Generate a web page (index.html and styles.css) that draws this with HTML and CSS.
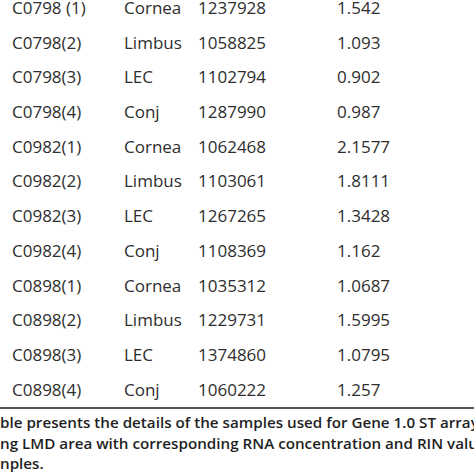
FILE: index.html
```html
<!DOCTYPE html>
<html>
<head>
<meta charset="utf-8">
<link rel="stylesheet" href="styles.css">
</head>
<body>
<div class="page">
  <div class="table">
    <div class="row"><span>C0798 (1)</span><span>Cornea</span><span>1237928</span><span>1.542</span></div>
    <div class="row"><span>C0798(2)</span><span>Limbus</span><span>1058825</span><span>1.093</span></div>
    <div class="row"><span>C0798(3)</span><span>LEC</span><span>1102794</span><span>0.902</span></div>
    <div class="row"><span>C0798(4)</span><span>Conj</span><span>1287990</span><span>0.987</span></div>
    <div class="row"><span>C0982(1)</span><span>Cornea</span><span>1062468</span><span>2.1577</span></div>
    <div class="row"><span>C0982(2)</span><span>Limbus</span><span>1103061</span><span>1.8111</span></div>
    <div class="row"><span>C0982(3)</span><span>LEC</span><span>1267265</span><span>1.3428</span></div>
    <div class="row"><span>C0982(4)</span><span>Conj</span><span>1108369</span><span>1.162</span></div>
    <div class="row"><span>C0898(1)</span><span>Cornea</span><span>1035312</span><span>1.0687</span></div>
    <div class="row"><span>C0898(2)</span><span>Limbus</span><span>1229731</span><span>1.5995</span></div>
    <div class="row"><span>C0898(3)</span><span>LEC</span><span>1374860</span><span>1.0795</span></div>
    <div class="row"><span>C0898(4)</span><span>Conj</span><span>1060222</span><span>1.257</span></div>
  </div>
  <div class="caption">
    <div class="line">ble presents the details of the samples used for Gene 1.0 ST array</div>
    <div class="line">ng LMD area with corresponding RNA concentration and RIN values</div>
    <div class="line">nples.</div>
  </div>
</div>
</body>
</html>
```

FILE: styles.css
```css
html, body {
  margin: 0;
  padding: 0;
  background: #fff;
}
.page {
  width: 474px;
  height: 474px;
  overflow: hidden;
  font-family: "Open Sans", "Noto Sans", sans-serif;
}
.table {
  margin-top: -9px;
  color: #2e2e2e;
  font-size: 17px;
}
.row {
  display: grid;
  grid-template-columns: 112px 74px 139px 1fr;
  padding-left: 12px;
  height: 34.7px;
  line-height: 34.7px;
  white-space: nowrap;
}
.caption {
  border-top: 2px solid #555;
  padding-top: 3px;
  color: #1f1f1f;
  font-size: 15.2px;
  font-weight: 600;
  line-height: 20.5px;
}
.line {
  white-space: nowrap;
  overflow: hidden;
}
```
